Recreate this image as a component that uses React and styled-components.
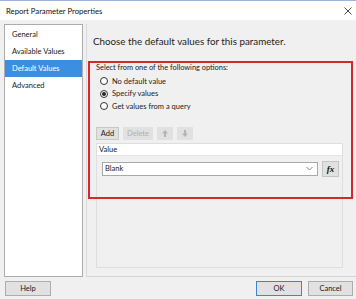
import React from "react";
import styled, { createGlobalStyle } from "styled-components";

const Global = createGlobalStyle`
  html, body { margin: 0; padding: 0; }
  body { background: #f0f0f0; font-family: "Lato", "Noto Sans", sans-serif; }
  * { box-sizing: border-box; }
`;

const Window = styled.div`
  width: 356px;
  height: 299px;
  background: #f0f0f0;
  border-top: 1px solid #9cb8d8;
  display: flex;
  flex-direction: column;
  position: relative;
  font-size: 7.5px;
  color: #1a1a1a;
`;

const TitleBar = styled.div`
  height: 19px;
  background: #ffffff;
  display: flex;
  align-items: center;
  justify-content: space-between;
  padding: 0 4px 0 6px;
  font-size: 7.7px;
  color: #111;
`;

const Main = styled.div`
  flex: 1;
  display: flex;
  gap: 3px;
  padding: 4px 0 0 4px;
`;

const NavList = styled.div`
  width: 79px;
  background: #fff;
  border: 1px solid #acacac;
  padding-top: 1px;
  display: flex;
  flex-direction: column;
`;

const NavItem = styled.div`
  height: 17px;
  display: flex;
  align-items: center;
  padding-left: 7px;
  background: ${(p) => (p.$active ? "#3b8ee0" : "transparent")};
  color: ${(p) => (p.$active ? "#fff" : "#1a1a1a")};
`;

const Content = styled.div`
  flex: 1;
  border-left: 1px solid #dadada;
  border-bottom: 1px solid #d4d4d4;
  display: flex;
  flex-direction: column;
  padding: 0 0 8px 9px;
`;

const Heading = styled.div`
  font-size: 9.8px;
  color: #222;
  height: 34px;
  display: flex;
  align-items: center;
  padding-top: 0;
  margin-left: -3px;
`;

const Prompt = styled.div`
  margin-top: 4px;
  height: 10px;
  display: flex;
  align-items: center;
  font-size: 7.4px;
`;

const Options = styled.div`
  display: flex;
  flex-direction: column;
  margin-top: 3px;
  padding-left: 4px;
`;

const Option = styled.div`
  display: flex;
  align-items: center;
  gap: 4px;
  height: 12.5px;
`;

const Radio = styled.span`
  width: 8px;
  height: 8px;
  border-radius: 50%;
  border: 1px solid #333;
  background: #fff;
  display: flex;
  align-items: center;
  justify-content: center;
  &::after {
    content: "";
    width: 4px;
    height: 4px;
    border-radius: 50%;
    background: ${(p) => (p.$checked ? "#222" : "transparent")};
  }
`;

const ButtonRow = styled.div`
  display: flex;
  gap: 4px;
  margin-top: 14px;
`;

const SmallButton = styled.div`
  height: 13px;
  width: ${(p) => p.$w}px;
  background: #e1e1e1;
  border: 1px solid ${(p) => (p.$disabled ? "#e1e1e1" : "#c8c8c8")};
  color: ${(p) => (p.$disabled ? "#b0b0b0" : "#222")};
  display: flex;
  align-items: center;
  justify-content: center;
  font-size: 7.5px;
`;

const Grid = styled.div`
  margin-top: 3px;
  width: 247px;
  flex: 1;
  border: 1px solid #dedede;
  display: flex;
  flex-direction: column;
`;

const GridHeader = styled.div`
  height: 12px;
  background: #fff;
  border-bottom: 1px solid #e4e4e4;
  display: flex;
  align-items: center;
  padding-left: 2px;
  font-size: 7.5px;
`;

const GridRow = styled.div`
  display: flex;
  align-items: center;
  gap: 4px;
  padding: 5px 0 0 5px;
`;

const Combo = styled.div`
  width: 216px;
  height: 14px;
  background: #fff;
  border: 1px solid #a9a9a9;
  display: flex;
  align-items: center;
  justify-content: space-between;
  padding: 0 4px 0 2px;
  font-size: 7.5px;
`;

const FxButton = styled.div`
  width: 17px;
  height: 16px;
  background: #e1e1e1;
  border: 1px solid #c4c4c4;
  display: flex;
  align-items: center;
  justify-content: center;
  font-family: "Liberation Serif", serif;
  font-style: italic;
  font-weight: bold;
  font-size: 9px;
  color: #111;
`;

const Footer = styled.div`
  height: 22px;
  display: flex;
  align-items: flex-start;
  padding: 4px 3px 0 5px;
  gap: 6px;
`;

const DlgButton = styled.div`
  width: ${(p) => p.$w}px;
  height: 15px;
  background: #e1e1e1;
  border: 1px solid ${(p) => (p.$primary ? "#3c84d6" : "#adadad")};
  display: flex;
  align-items: center;
  justify-content: center;
  font-size: 7.5px;
  margin-left: ${(p) => (p.$push ? "auto" : "0")};
`;

const Annotation = styled.div`
  position: absolute;
  left: 88px;
  top: 60px;
  width: 265px;
  height: 138px;
  border: 2px solid #d9252c;
  pointer-events: none;
`;

const Chevron = () => (
  <svg width="7" height="5" viewBox="0 0 7 5">
    <path d="M0.5 1 L3.5 4 L6.5 1" fill="none" stroke="#777" strokeWidth="0.9" />
  </svg>
);

const Arrow = ({ down }) => (
  <svg width="6" height="7" viewBox="0 0 6 7">
    <path
      d={down ? "M2 0 H4 V3.5 H6 L3 7 L0 3.5 H2 Z" : "M2 7 H4 V3.5 H6 L3 0 L0 3.5 H2 Z"}
      fill="#b4b4b4"
    />
  </svg>
);

const CloseIcon = () => (
  <svg width="8" height="8" viewBox="0 0 8 8">
    <path d="M0.5 0.5 L7.5 7.5 M7.5 0.5 L0.5 7.5" stroke="#333" strokeWidth="0.9" />
  </svg>
);

export default function App() {
  return (
    <>
      <Global />
      <Window>
        <TitleBar>
          <span>Report Parameter Properties</span>
          <CloseIcon />
        </TitleBar>
        <Main>
          <NavList>
            <NavItem>General</NavItem>
            <NavItem>Available Values</NavItem>
            <NavItem $active>Default Values</NavItem>
            <NavItem>Advanced</NavItem>
          </NavList>
          <Content>
            <Heading>Choose the default values for this parameter.</Heading>
            <Prompt>Select from one of the following options:</Prompt>
            <Options>
              <Option>
                <Radio />
                No default value
              </Option>
              <Option>
                <Radio $checked />
                Specify values
              </Option>
              <Option>
                <Radio />
                Get values from a query
              </Option>
            </Options>
            <ButtonRow>
              <SmallButton $w={23}>Add</SmallButton>
              <SmallButton $w={30} $disabled>Delete</SmallButton>
              <SmallButton $w={16} $disabled>
                <Arrow />
              </SmallButton>
              <SmallButton $w={16} $disabled>
                <Arrow down />
              </SmallButton>
            </ButtonRow>
            <Grid>
              <GridHeader>Value</GridHeader>
              <GridRow>
                <Combo>
                  <span>Blank</span>
                  <Chevron />
                </Combo>
                <FxButton>fx</FxButton>
              </GridRow>
            </Grid>
          </Content>
        </Main>
        <Footer>
          <DlgButton $w={46}>Help</DlgButton>
          <DlgButton $w={46} $primary $push>OK</DlgButton>
          <DlgButton $w={45}>Cancel</DlgButton>
        </Footer>
        <Annotation />
      </Window>
    </>
  );
}
